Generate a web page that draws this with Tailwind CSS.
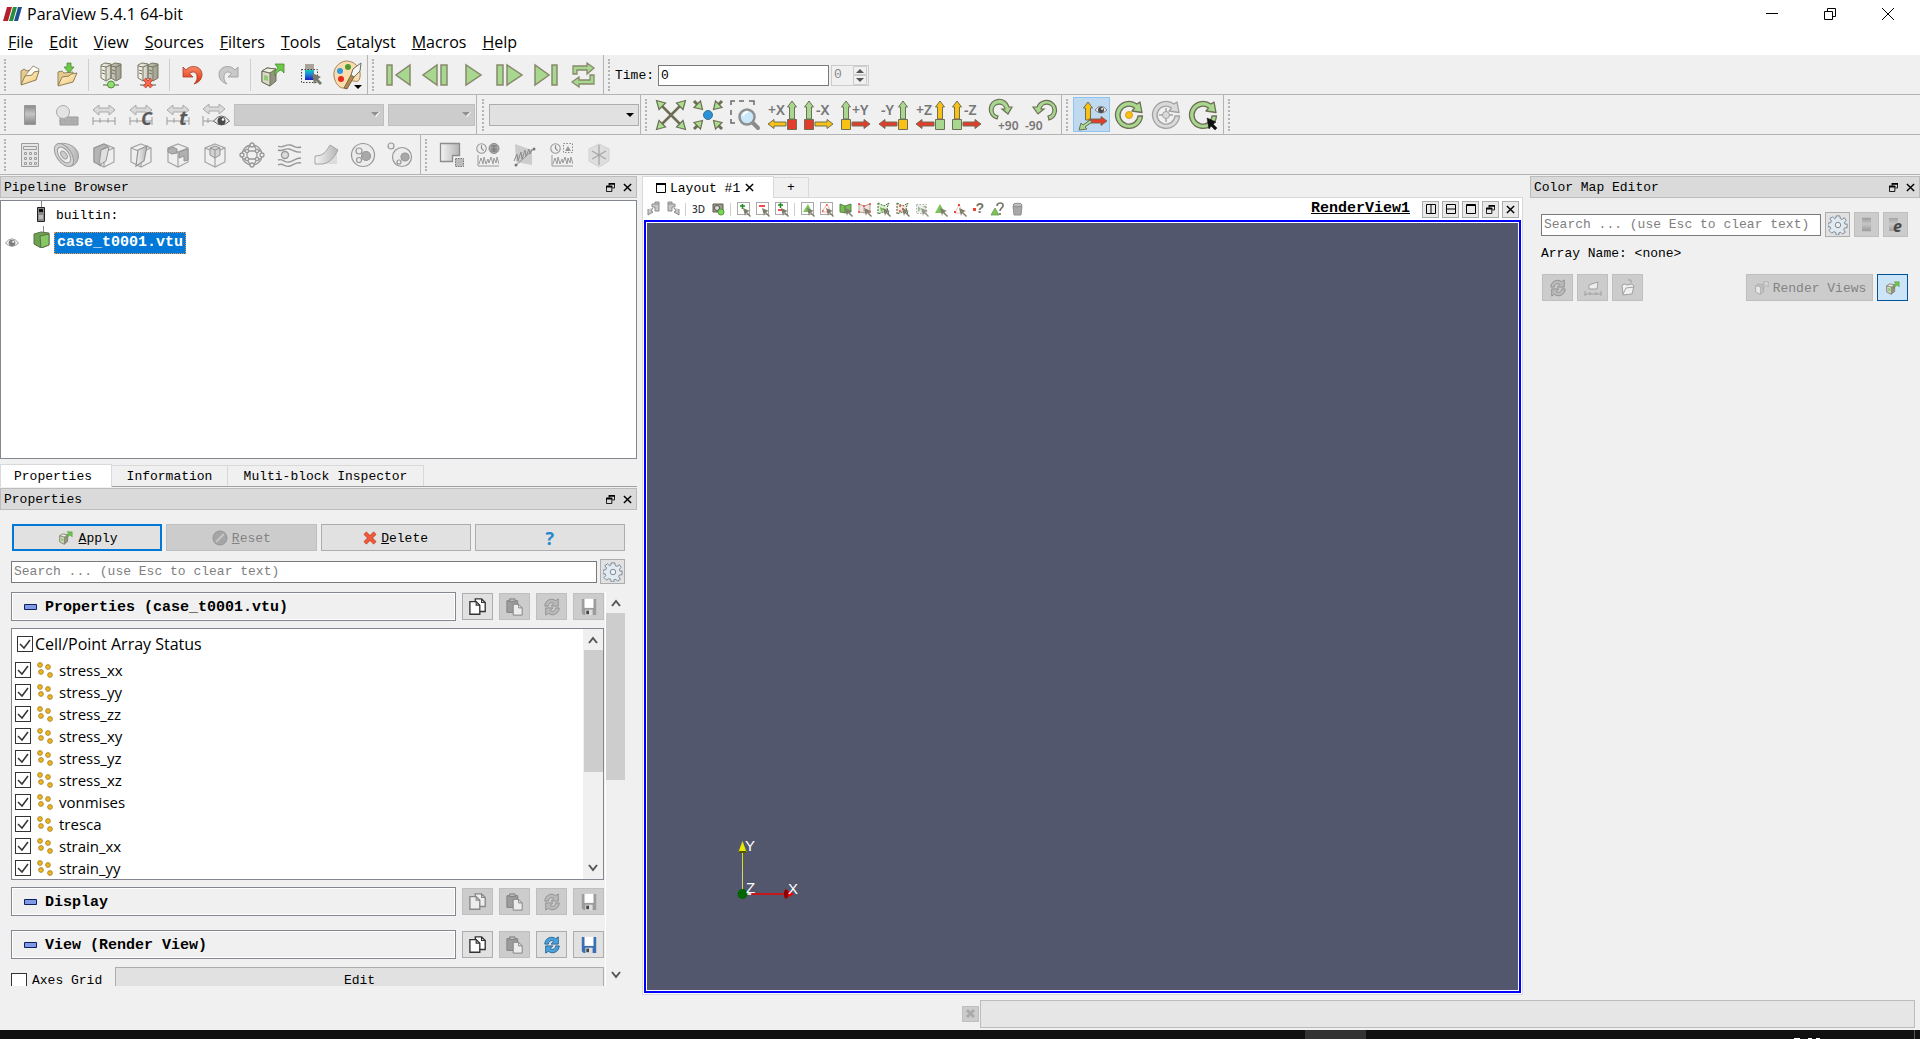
<!DOCTYPE html>
<html lang="en">
<head>
  <meta charset="UTF-8">
  <meta name="viewport" content="width=device-width, initial-scale=1.0">
  <title>ParaView 5.4.1 64-bit</title>
  <script src="https://cdn.jsdelivr.net/npm/@tailwindcss/browser@4"></script>
</head>
<body class="h-screen flex flex-col overflow-hidden bg-[#f0f0f0] text-black text-[13px] leading-4 font-['Liberation_Mono',monospace]">

  <!-- Icon sprite -->
  <svg class="absolute size-0" aria-hidden="true">
    <defs>
      <linearGradient id="gGrey" x1="0" y1="0" x2="1" y2="0"><stop offset="0" stop-color="#f4f4f4"/><stop offset="1" stop-color="#b4b4b4"/></linearGradient>
      <linearGradient id="gBar" x1="0" y1="0" x2="0" y2="1"><stop offset="0" stop-color="#8a8a8a"/><stop offset=".45" stop-color="#c4c4c4"/><stop offset="1" stop-color="#858585"/></linearGradient>
      <linearGradient id="gFolder" x1="0" y1="0" x2="1" y2="1"><stop offset="0" stop-color="#fff3cf"/><stop offset="1" stop-color="#f2c777"/></linearGradient>
      <linearGradient id="gServer" x1="0" y1="0" x2="1" y2="0"><stop offset="0" stop-color="#fafaf4"/><stop offset="1" stop-color="#9b9b8c"/></linearGradient>
      <linearGradient id="gRed" x1="0" y1="0" x2="0" y2="1"><stop offset="0" stop-color="#f88a66"/><stop offset="1" stop-color="#dd2b0c"/></linearGradient>
      <linearGradient id="gRainbow" x1="0" y1="0" x2="0" y2="1"><stop offset="0" stop-color="#12c9b0"/><stop offset=".4" stop-color="#1a8de0"/><stop offset="1" stop-color="#1b1fb8"/></linearGradient>
    </defs>

    <symbol id="folder" viewBox="0 0 32 32">
      <path d="M7 25V12l3-2 3 2 3-1 7 3z" fill="#e8c98a" stroke="#8d8468"/>
      <path d="M11 17L19 7l6 3-3 11z" fill="#fdfdf8" stroke="#9b957e"/>
      <path d="M7 26l4-9 7-1 2-3 5-1-3 9z" fill="url(#gFolder)" stroke="#8d7f55" stroke-linejoin="round"/>
    </symbol>
    <symbol id="folder-in" viewBox="0 0 32 32">
      <path d="M7 26V13l4-1 2 2 9-1v4z" fill="#e8c98a" stroke="#8d8468"/>
      <path d="M7 27l4-9 7-1 2-2 6-1-4 9z" fill="url(#gFolder)" stroke="#8d7f55" stroke-linejoin="round"/>
      <path d="M16 4h4v4h3l-5 6-5-6h3z" fill="#6cc84a" stroke="#4f8a36" stroke-width=".8"/>
    </symbol>
    <symbol id="server" viewBox="0 0 32 32">
      <path d="M6 6l4-2 6 1v14l-5 3-5-3z M16 6l4-2 6 1v14l-5 3-5-3z" fill="url(#gServer)" stroke="#77775f"/>
      <path d="M6 7l5 1v13M11 8l5-2M16 7l5 1v13M21 8l5-2M7 11l3 1M7 14l3 1M17 11l3 1M17 14l3 1" fill="none" stroke="#77775f"/>
      <path d="M8 26h16" stroke="#8c8c78" stroke-width="1.500"/>
    </symbol>
    <symbol id="undo" viewBox="0 0 32 32">
      <path d="M7 8v10h10l-3.500-3.500c3.500-3 8-1.500 7.500 4.500 0 2-1 4-3 6 5-1.500 8-5 8-9.500 0-5-4-8-8.500-8-3 0-5.500 1-7.500 3.500z" stroke-width=".8"/>
    </symbol>
    <symbol id="apply" viewBox="0 0 32 32">
      <path d="M5 12l5-3 9 1v12l-6 5-8-4z" fill="#94947f" stroke="#6f6f5c"/>
      <path d="M5 12l8 2v13l-8-4z" fill="#dadaca" stroke="#6f6f5c"/>
      <path d="M5 12l5-3 9 1-6 4z" fill="#efefe4" stroke="#6f6f5c"/>
      <path d="M7 16l4 1v5l-4-1z" fill="#8fce70"/>
      <path d="M27 5v9l-3-3c-3 1-5 3-6 6-1-4 1-7 3-8l-3-4z" fill="#6cc84a" stroke="#4c8a31" stroke-width=".8"/>
    </symbol>
    <symbol id="apply-grey" viewBox="0 0 32 32">
      <path d="M5 12l5-3 9 1v12l-6 5-8-4z" fill="#c2c2c2" stroke="#9a9a9a"/>
      <path d="M5 12l8 2v13l-8-4z" fill="#ececec" stroke="#9a9a9a"/>
      <path d="M27 5v9l-3-3c-3 1-5 3-6 6-1-4 1-7 3-8l-3-4z" fill="#dcdcdc" stroke="#9a9a9a"/>
    </symbol>
    <symbol id="cursor" viewBox="0 0 12 14"><path d="M1 1l9 4-3 2 4 4-2 2-4-4-2 3z"/></symbol>
    <symbol id="dbl-arrow" viewBox="0 0 32 32">
      <path d="M5 11l6-5v3h10V6l6 5-6 5v-3H11v3z" fill="#d9d9d9" stroke="#aaa"/>
    </symbol>
    <symbol id="ruler" viewBox="0 0 32 32"><path d="M5 18v8M27 18v8M5 22h22M12 19v5M20 19v5" fill="none" stroke="#9a9a9a"/></symbol>
    <symbol id="eye" viewBox="0 0 16 12">
      <path d="M0 6Q8-4 16 6 8 14 0 6z" fill="#e9e9e9" stroke="#666"/><circle cx="8" cy="6" r="4" fill="#4a4a4a"/><circle cx="9.500" cy="4.500" r="1.300" fill="#fff"/>
    </symbol>
    <symbol id="cube" viewBox="0 0 32 32">
      <path d="M16 5l10 4v14l-10 5-10-5V9z" fill="#efefef" stroke="#a4a4a4" stroke-width="1.200"/>
      <path d="M6 9l10 4 10-4M16 13v15" fill="none" stroke="#a4a4a4" stroke-width="1.200"/>
    </symbol>
    <symbol id="wave" viewBox="0 0 22 12"><path d="M1 0v11h21M2 9l2-6 2 6 1-7 2 7 2-5 1 4 2-6 2 7 1-6 2 5 1-6 2 7" fill="none" stroke="#9a9a9a"/></symbol>
    <symbol id="clock" viewBox="0 0 10 10"><circle cx="5" cy="5" r="4.300" fill="#eee" stroke="#9a9a9a"/><path d="M5 2v3l2 2" fill="none" stroke="#888"/></symbol>

    <symbol id="arr-up" viewBox="0 0 10 20"><path d="M5 1l4.500 6H7.500v12h-5V7H.5z" stroke="#6e6e55" stroke-linejoin="round"/></symbol>
    <symbol id="arr-left" viewBox="0 0 20 10"><path d="M1 5l6-4.500v2.500h12v4H7v2.500z" stroke="#6e6e55" stroke-linejoin="round"/></symbol>
    <symbol id="arr-right" viewBox="0 0 20 10"><path d="M19 5l-6-4.500v2.500H1v4h12v2.500z" stroke="#6e6e55" stroke-linejoin="round"/></symbol>
    <symbol id="ring" viewBox="0 0 32 32">
      <path d="M29.500 17A13.500 13.500 0 1 1 24 5L27 3l2 10.500-10-1.500 2.500-3A9 9 0 1 0 25 17z" stroke-width="1.300" stroke-linejoin="round"/>
    </symbol>

    <symbol id="float" viewBox="0 0 10 10"><path d="M3.500 3V.5h6v5H7M.5 3.500h6v6h-6z" fill="none" stroke="#000"/><path d="M3 1h7M0 4h7" stroke="#000" stroke-width="2"/></symbol>
    <symbol id="cross" viewBox="0 0 10 10"><path d="M1 1l8 8M9 1l-8 8" stroke="#000" stroke-width="1.600"/></symbol>
    <symbol id="gear" viewBox="0 0 22 22">
      <path d="M9 1h4l.5 3 2 .8L18 3l2 3-2 2 .6 2H21v4l-3 .3-.8 1.700L19 19l-3 2-2-2-2 .6V22H9l-.6-3-2-.6L4 20l-3-3 2-2-.6-2H0V9l3-.5.800-2L2 4l3-2 2 2 1.600-.6z" fill="#e2eaf1" stroke="#75808a"/>
      <circle cx="11" cy="11" r="3" fill="#f0f0f0" stroke="#75808a"/>
    </symbol>
    <symbol id="copy" viewBox="0 0 20 20">
      <path d="M7 1h7l4 4v10H7z" stroke-width="1.500"/><path d="M1 4h7l4 4v10H1z" stroke-width="1.500"/><path d="M8 4v4h4M14 1v4h4" fill="none" stroke-width="1.300"/>
    </symbol>
    <symbol id="paste" viewBox="0 0 20 20">
      <path d="M1 3h12v13H1z" fill="#9c9c9c" stroke="#7e7e7e"/><path d="M4 1h6v3H4z" fill="#b9b9b9" stroke="#7e7e7e"/>
      <path d="M8 7h6l4 4v8H8z" fill="#ececec" stroke="#7e7e7e"/><path d="M14 7v4h4" fill="none" stroke="#7e7e7e"/>
    </symbol>
    <symbol id="refresh" viewBox="0 0 20 20">
      <path d="M2 9C2 3 9-1 14 3l3-2v8H9l3-3C9 4 6 6 6 9z"/><path d="M18 11c0 6-7 10-12 6l-3 2v-8h8l-3 3c3 2 6 0 6-3z"/>
    </symbol>
    <symbol id="floppy" viewBox="0 0 20 20">
      <path d="M2 1h16v18H4l-2-2z"/><path d="M5 1h10v10H5z" fill="#fff"/><path d="M6 13h8v6H6z" fill="#ddd"/><path d="M7 14h3v4H7z" fill="#444"/>
    </symbol>
    <symbol id="minus" viewBox="0 0 13 6"><path d="M.5.5h12v5H.5z" fill="#7f9ae6" stroke="#10205f"/></symbol>
    <symbol id="chev-up" viewBox="0 0 10 8"><path d="M1 7l4-5 4 5" fill="none" stroke="#555" stroke-width="2"/></symbol>
    <symbol id="chev-down" viewBox="0 0 10 8"><path d="M1 1l4 5 4-5" fill="none" stroke="#555" stroke-width="2"/></symbol>
    <symbol id="points" viewBox="0 0 16 18">
      <g fill="#f0b41c" stroke="#9a7d2c" stroke-width=".8"><circle cx="3" cy="4" r="2.400"/><circle cx="11" cy="6" r="2.400"/><circle cx="4" cy="11" r="2.400"/><circle cx="13" cy="14" r="2.400"/></g>
    </symbol>
    <symbol id="check" viewBox="0 0 16 16"><path d="M3 8l4 4 6-8" fill="none" stroke="#333" stroke-width="1.500"/></symbol>
    <symbol id="dots" viewBox="0 0 16 16"><path d="M1.500 1.500h12v12h-12z" fill="none" stroke="#555" stroke-dasharray="1 1"/></symbol>
    <symbol id="ptr" viewBox="0 0 16 16"><path d="M7 7l7 3-3 1 4 4-1 1-4-4-1 3z" fill="#7d7d6c"/></symbol>
    <symbol id="block" viewBox="0 0 16 16"><path d="M2 3l5 2 6-2v8l-5 1-6-1z" stroke-width=".9"/><path d="M7 5v7" stroke-width=".9"/></symbol>
  </svg>

  <!-- Title bar -->
  <header class="h-7 shrink-0 bg-white flex items-center pl-[3px] pr-[3px] font-['Open_Sans',sans-serif] text-[16px]">
    <svg class="w-[19px] h-4" viewBox="0 0 19 16"><path d="M4 1h5L5 15H0z" fill="#b3202c"/><path d="M10 1h4l-4 14H6z" fill="#2a8c3c"/><path d="M15 1h4l-4 14h-4z" fill="#1d4f91"/></svg>
    <h1 class="ml-[5px]">ParaView 5.4.1 64-bit</h1>
    <div class="ml-auto flex">
      <button class="w-[58px] flex justify-center" aria-label="Minimize"><svg class="size-3" viewBox="0 0 12 12"><path d="M0 5.500h12" stroke="#000"/></svg></button>
      <button class="w-[58px] flex justify-center" aria-label="Restore"><svg class="size-3" viewBox="0 0 12 12"><path d="M3.500 3V.5h8v8H9M.5 3.500h8v8h-8z" fill="none" stroke="#000"/></svg></button>
      <button class="w-[58px] flex justify-center" aria-label="Close"><svg class="size-3" viewBox="0 0 12 12"><path d="M0 0l12 12M12 0L0 12" stroke="#000"/></svg></button>
    </div>
  </header>

  <!-- Menu -->
  <nav class="h-[27px] shrink-0 bg-white flex items-center gap-4 pl-2 font-['Open_Sans',sans-serif] text-[16px]">
    <a href="#"><u>F</u>ile</a>
    <a href="#"><u>E</u>dit</a>
    <a href="#"><u>V</u>iew</a>
    <a href="#"><u>S</u>ources</a>
    <a href="#"><u>F</u>ilters</a>
    <a href="#"><u>T</u>ools</a>
    <a href="#"><u>C</u>atalyst</a>
    <a href="#"><u>M</u>acros</a>
    <a href="#"><u>H</u>elp</a>
  </nav>

  <!-- Main toolbar, VCR controls, time -->
  <div class="h-10 shrink-0 flex border-b border-[#b4b4b4]">
    <div class="flex items-center border-r border-[#b4b4b4] pr-[2px] pt-px">
      <span class="w-[11px] h-8 flex pl-1"><span class="border-l-2 border-dotted border-[#b4b4b4]"></span></span>
      <button class="w-[37px] flex justify-center" aria-label="Open"><svg class="size-8"><use href="#folder"/></svg></button>
      <button class="w-[37px] flex justify-center" aria-label="Load state"><svg class="size-8"><use href="#folder-in"/></svg></button>
      <span class="w-[7px] h-8 flex justify-center"><span class="border-l border-[#cfcfcf]"></span></span>
      <button class="w-[37px] flex justify-center" aria-label="Connect"><svg class="size-8" viewBox="0 0 32 32"><use href="#server"/><circle cx="16" cy="25.500" r="3.500" fill="#8fe070" stroke="#4f8a36"/></svg></button>
      <button class="w-[37px] flex justify-center" aria-label="Disconnect"><svg class="size-8" viewBox="0 0 32 32"><use href="#server"/><path d="M12.500 20l7 8M19.500 20l-7 8" stroke="#a33020" stroke-width="3.500"/><path d="M12.500 20l7 8M19.500 20l-7 8" stroke="#ff6a50" stroke-width="2.200"/></svg></button>
      <span class="w-[7px] h-8 flex justify-center"><span class="border-l border-[#cfcfcf]"></span></span>
      <button class="w-[37px] flex justify-center" aria-label="Undo"><svg class="size-8" viewBox="0 0 32 32" fill="url(#gRed)" stroke="#a83a22"><use href="#undo"/></svg></button>
      <button class="w-[37px] flex justify-center" aria-label="Redo"><svg class="size-8 -scale-x-100" viewBox="0 0 32 32" fill="#c9c9c9" stroke="#979797"><use href="#undo"/></svg></button>
      <span class="w-[7px] h-8 flex justify-center"><span class="border-l border-[#cfcfcf]"></span></span>
      <button class="w-[37px] flex justify-center" aria-label="Auto apply"><svg class="size-8"><use href="#apply"/></svg></button>
      <button class="w-[37px] flex justify-center" aria-label="Find data"><svg class="size-8" viewBox="0 0 32 32"><path d="M11 5h9v6h-9z" fill="#a9a59a"/><path d="M11 11h9v10h-9z" fill="url(#gRainbow)"/><path d="M7.500 10.500h16v13h-16z" fill="none" stroke="#444" stroke-dasharray="1.500 1.500"/><use href="#cursor" x="17" y="13" width="12" height="14" fill="#77776c"/></svg></button>
      <button class="w-[37px] flex justify-center" aria-label="Color palette"><svg class="size-8" viewBox="0 0 32 32">
        <path d="M15 2C7 3 2 10 3 17c1 8 6 13 11 12 4-1 2-5 5-7 3-1 7 2 9-1 3-6 0-13-4-16-2-2-6-3-9-3z" fill="#fbdcae" stroke="#a08558"/>
        <circle cx="17" cy="8" r="3" fill="#4e9a2e"/><circle cx="9" cy="12" r="3" fill="#2c9be0"/><circle cx="10" cy="20" r="3" fill="#e8291c"/>
        <path d="M13 29l7-13 3 2-7 12z" fill="#b28a4e" stroke="#6b532c" stroke-width=".8"/><path d="M20 16l2-6 8-6-1 8-6 6z" fill="#f6f6f0" stroke="#6b6b60"/>
        <path d="M23 26h8l-4 4z" fill="#000"/></svg></button>
    </div>
    <div class="flex items-center border-r border-[#b4b4b4] pr-[2px] pt-px">
      <span class="w-[11px] h-8 flex pl-1"><span class="border-l-2 border-dotted border-[#b4b4b4]"></span></span>
      <button class="w-[37px] flex justify-center" aria-label="First frame"><svg class="size-8" viewBox="0 0 32 32" fill="#a8d78f" stroke="#87896b" stroke-width="1.500"><path d="M5 6h5v20H5zM28 6v20L14 16z"/></svg></button>
      <button class="w-[37px] flex justify-center" aria-label="Previous frame"><svg class="size-8" viewBox="0 0 32 32" fill="#a8d78f" stroke="#87896b" stroke-width="1.500"><path d="M18 6v20L4 16zM22 6h6v20h-6z"/></svg></button>
      <button class="w-[37px] flex justify-center" aria-label="Play"><svg class="size-8" viewBox="0 0 32 32" fill="#a8d78f" stroke="#87896b" stroke-width="1.500"><path d="M10 6v20l15-10z"/></svg></button>
      <button class="w-[37px] flex justify-center" aria-label="Next frame"><svg class="size-8" viewBox="0 0 32 32" fill="#a8d78f" stroke="#87896b" stroke-width="1.500"><path d="M4 6h6v20H4zM14 6v20l15-10z"/></svg></button>
      <button class="w-[37px] flex justify-center" aria-label="Last frame"><svg class="size-8" viewBox="0 0 32 32" fill="#a8d78f" stroke="#87896b" stroke-width="1.500"><path d="M5 6v20l14-10zM22 6h5v20h-5z"/></svg></button>
      <button class="w-[37px] flex justify-center" aria-label="Loop"><svg class="size-8" viewBox="0 0 32 32" fill="#a8d78f" stroke="#87896b" stroke-width="1.300"><path d="M6 15V7h14V4l7 5-7 6v-4H10v4zM27 16v9H12v3l-7-5 7-5v3h11v-5z"/></svg></button>
    </div>
    <div class="flex items-center pt-px">
      <span class="w-[11px] h-8 flex pl-1"><span class="border-l-2 border-dotted border-[#b4b4b4]"></span></span>
      <label for="time" class="w-[43px] pt-[2px]">Time:</label>
      <input id="time" type="text" value="0" class="w-[171px] h-[21px] bg-white border border-[#7a7a7a] px-[2px] outline-none">
      <div class="ml-[2px] w-[38px] h-[21px] border border-[#ccc] flex items-center justify-between pl-[2px] text-[#888]">
        <input type="text" value="0" disabled aria-label="Time step" class="w-4">
        <svg class="w-[15px] h-[19px]" viewBox="0 0 15 19"><path d="M.5.5h13v8H.5zM.5 9.500h13v9H.5z" fill="#f0f0f0" stroke="#ccc"/><path d="M3 7h8L7 3zM3 12h8l-4 4z" fill="#555"/></svg>
      </div>
    </div>
  </div>

  <!-- Color toolbar, representation, camera -->
  <div class="h-10 shrink-0 flex border-b border-[#b4b4b4]">
    <div class="flex items-center border-r border-[#b4b4b4] pr-px">
      <span class="w-[11px] h-8 flex pl-1"><span class="border-l-2 border-dotted border-[#b4b4b4]"></span></span>
      <button class="w-[37px] flex justify-center" disabled aria-label="Toggle color legend"><svg class="size-8" viewBox="0 0 32 32"><path d="M10.500 6.500h11v19h-11z" fill="url(#gBar)" stroke="#9a9a9a"/></svg></button>
      <button class="w-[37px] flex justify-center" disabled aria-label="Edit color map"><svg class="size-8" viewBox="0 0 32 32"><path d="M9 18h18v8H9z" fill="#b0b0b0" stroke="#999"/><path d="M14 18v8M21 18v8M8 22h19" stroke="#a8a8a8"/><circle cx="12" cy="13" r="6.500" fill="#e3e3e3" stroke="#aaa"/></svg></button>
      <button class="w-[37px] flex justify-center" disabled aria-label="Rescale to data range"><svg class="size-8" viewBox="0 0 32 32"><use href="#dbl-arrow"/><use href="#ruler"/></svg></button>
      <button class="w-[37px] flex justify-center" disabled aria-label="Rescale to custom range"><svg class="size-8" viewBox="0 0 32 32"><use href="#dbl-arrow"/><use href="#ruler"/><text x="16" y="26" font-family="Open Sans, sans-serif" font-size="18" font-weight="bold" font-style="italic" fill="#5a5a5a">C</text></svg></button>
      <button class="w-[37px] flex justify-center" disabled aria-label="Rescale over time"><svg class="size-8" viewBox="0 0 32 32"><use href="#dbl-arrow"/><use href="#ruler"/><text x="17" y="26" font-family="Open Sans, sans-serif" font-size="20" font-weight="bold" font-style="italic" fill="#5a5a5a">t</text></svg></button>
      <button class="w-[37px] flex justify-center" disabled aria-label="Rescale to visible range"><svg class="size-8" viewBox="0 0 32 32"><use href="#dbl-arrow" x="-1" y="-1"/><path d="M4 17v10M4 22h11M9 19v5" stroke="#9a9a9a"/><use href="#eye" x="14" y="16" width="17" height="12"/></svg></button>
      <div class="grid items-center ml-px">
        <select disabled aria-label="Color array" class="col-start-1 row-start-1 appearance-none w-[150px] h-[22px] bg-[#ccc] border border-[#bfbfbf]"><option></option></select>
        <svg class="col-start-1 row-start-1 justify-self-end mr-1 w-[9px] h-[6px]" viewBox="0 0 9 6"><path d="M1 0h8L5 5z" fill="#fff"/><path d="M0 0h8L4 4z" fill="#909090"/></svg>
      </div>
      <div class="grid items-center ml-1">
        <select disabled aria-label="Component" class="col-start-1 row-start-1 appearance-none w-[87px] h-[22px] bg-[#ccc] border border-[#bfbfbf]"><option></option></select>
        <svg class="col-start-1 row-start-1 justify-self-end mr-1 w-[9px] h-[6px]" viewBox="0 0 9 6"><path d="M1 0h8L5 5z" fill="#fff"/><path d="M0 0h8L4 4z" fill="#909090"/></svg>
      </div>
    </div>
    <div class="flex items-center border-r border-[#b4b4b4] pr-px">
      <span class="w-3 h-8 flex pl-[5px]"><span class="border-l-2 border-dotted border-[#b4b4b4]"></span></span>
      <div class="grid items-center">
        <select aria-label="Representation" class="col-start-1 row-start-1 appearance-none w-[150px] h-[22px] bg-[#e1e1e1] border border-[#adadad]"><option></option></select>
        <svg class="col-start-1 row-start-1 justify-self-end mr-[5px] w-2 h-1" viewBox="0 0 8 4"><path d="M0 0h8L4 4z"/></svg>
      </div>
    </div>
    <div class="flex items-center border-r border-[#b4b4b4] pr-[2px] font-['Noto_Sans',sans-serif]">
      <span class="w-[11px] h-8 flex pl-1"><span class="border-l-2 border-dotted border-[#b4b4b4]"></span></span>
      <button class="w-[37px] flex justify-center" aria-label="Reset camera"><svg class="size-8" viewBox="0 0 32 32"><path d="M6 6l20 20M26 6L6 26" stroke="#6e6e55" stroke-width="2.500"/><path d="M1.500 1.500l9 2.500-6.500 6.500zM30.500 1.500L28 10.500 21.500 4zM1.500 30.500L4 21.500l6.500 6.500zM30.500 30.500L21.500 28l6.500-6.500z" fill="#a8e08e" stroke="#6e6e55" stroke-width="1.200"/></svg></button>
      <button class="w-[37px] flex justify-center" aria-label="Zoom to data"><svg class="size-8" viewBox="0 0 32 32"><path d="M2 2l5 5M30 2l-5 5M2 30l5-5M30 30l-5-5" stroke="#6e6e55" stroke-width="3"/><path d="M10.500 10.500L2 8.500 8.500 2zM21.500 10.500l2-8.500L30 8.500zM10.500 21.500l-2 8.500L2 23.500zM21.500 21.500l8.500 2-6.500 6.500z" fill="#a8e08e" stroke="#6e6e55" stroke-width="1.200"/><circle cx="16" cy="16" r="4.500" fill="#2592da" stroke="#45708c"/></svg></button>
      <button class="w-[37px] flex justify-center" aria-label="Zoom to box"><svg class="size-8" viewBox="0 0 32 32"><path d="M2 6V2h4M10 2h5M20 2h5v4M2 11v5M2 20v4h4" fill="none" stroke="#6a6a6a" stroke-width="1.500"/><path d="M23 23l6 6" stroke="#8b8b8b" stroke-width="4" stroke-linecap="round"/><circle cx="18" cy="18" r="7.500" fill="#c9e9fb" stroke="#909090" stroke-width="2.500"/><path d="M14 17q1-4 5-4" fill="none" stroke="#fff" stroke-width="2"/></svg></button>
      <button class="w-[37px] flex justify-center" aria-label="Set view +X"><svg class="size-8 overflow-visible" viewBox="0 0 32 32"><text x="2" y="16" font-size="14" font-weight="600" fill="#777" class="tracking-normal">+X</text><use href="#arr-up" x="21" y="1" width="10" height="20" fill="#a8d78f"/><use href="#arr-left" x="1" y="20" width="20" height="10" fill="#f9c016"/><path d="M21.500 20.500h9v10h-9z" fill="#e23d2c" stroke="#6e6e55"/></svg></button>
      <button class="w-[37px] flex justify-center" aria-label="Set view -X"><svg class="size-8 overflow-visible" viewBox="0 0 32 32"><text x="13" y="16" font-size="14" font-weight="600" fill="#777">-X</text><use href="#arr-up" x="1" y="1" width="10" height="20" fill="#a8d78f"/><use href="#arr-right" x="11" y="20" width="20" height="10" fill="#f9c016"/><path d="M1.500 20.500h9v10h-9z" fill="#e23d2c" stroke="#6e6e55"/></svg></button>
      <button class="w-[37px] flex justify-center" aria-label="Set view +Y"><svg class="size-8 overflow-visible" viewBox="0 0 32 32"><text x="12" y="16" font-size="14" font-weight="600" fill="#777">+Y</text><use href="#arr-up" x="1" y="1" width="10" height="20" fill="#a8d78f"/><use href="#arr-right" x="11" y="20" width="20" height="10" fill="#e23d2c"/><path d="M1.500 20.500h9v10h-9z" fill="#f9c016" stroke="#6e6e55"/></svg></button>
      <button class="w-[37px] flex justify-center" aria-label="Set view -Y"><svg class="size-8 overflow-visible" viewBox="0 0 32 32"><text x="4" y="16" font-size="14" font-weight="600" fill="#777">-Y</text><use href="#arr-up" x="21" y="1" width="10" height="20" fill="#a8d78f"/><use href="#arr-left" x="1" y="20" width="20" height="10" fill="#e23d2c"/><path d="M21.500 20.500h9v10h-9z" fill="#f9c016" stroke="#6e6e55"/></svg></button>
      <button class="w-[37px] flex justify-center" aria-label="Set view +Z"><svg class="size-8 overflow-visible" viewBox="0 0 32 32"><text x="2" y="16" font-size="14" font-weight="600" fill="#777">+Z</text><use href="#arr-up" x="21" y="1" width="10" height="20" fill="#f9c016"/><use href="#arr-left" x="1" y="20" width="20" height="10" fill="#e23d2c"/><path d="M21.500 20.500h9v10h-9z" fill="#a8d78f" stroke="#6e6e55"/></svg></button>
      <button class="w-[37px] flex justify-center" aria-label="Set view -Z"><svg class="size-8 overflow-visible" viewBox="0 0 32 32"><text x="13" y="16" font-size="14" font-weight="600" fill="#777">-Z</text><use href="#arr-up" x="1" y="1" width="10" height="20" fill="#f9c016"/><use href="#arr-right" x="11" y="20" width="20" height="10" fill="#e23d2c"/><path d="M1.500 20.500h9v10h-9z" fill="#a8d78f" stroke="#6e6e55"/></svg></button>
      <button class="w-[37px] flex justify-center" aria-label="Rotate +90"><svg class="size-8 overflow-visible" viewBox="0 0 32 32"><path d="M9 20A10 10 0 1 1 21 8h3l-4 7-6-5h3a6 6 0 1 0-7 7z" fill="#a8d78f" stroke="#6e6e55" stroke-width="1.200"/><text x="10" y="31" font-size="12" font-weight="600" fill="#777">+90</text></svg></button>
      <button class="w-[37px] flex justify-center" aria-label="Rotate -90"><svg class="size-8 overflow-visible" viewBox="0 0 32 32"><path d="M24 21A10 10 0 1 0 12 8H8l5 7 6-5h-3a6 6 0 1 1 7 7z" fill="#a8d78f" stroke="#6e6e55" stroke-width="1.200"/><text x="0" y="31" font-size="12" font-weight="600" fill="#777">-90</text></svg></button>
    </div>
    <div class="flex items-center border-r border-[#b4b4b4] pr-[2px]">
      <span class="w-[11px] h-8 flex pl-1"><span class="border-l-2 border-dotted border-[#b4b4b4]"></span></span>
      <button class="w-[37px] h-[35px] flex justify-center items-center bg-[#bfdaf0] border border-[#8fc4ef]" aria-label="Show orientation axes" aria-pressed="true"><svg class="size-8 shrink-0" viewBox="0 0 32 32"><use href="#arr-up" x="7" y="2" width="10" height="20" fill="#f9c016"/><use href="#arr-right" x="12" y="17" width="20" height="10" fill="#e23d2c"/><path d="M14 21l-7 5-2-2-2 7 8-1-2-2 7-5z" fill="#a8d78f" stroke="#6e6e55"/><use href="#eye" x="19" y="6" width="12" height="10"/></svg></button>
      <button class="w-[37px] flex justify-center" aria-label="Show center"><svg class="size-8" viewBox="0 0 32 32" fill="#a8d78f" stroke="#6e6e55"><use href="#ring"/><circle cx="16" cy="16" r="3.500" fill="#f9c016" stroke="#d9a014"/></svg></button>
      <button class="w-[37px] flex justify-center" aria-label="Reset center"><svg class="size-8" viewBox="0 0 32 32" fill="#dadada" stroke="#a2a2a2"><use href="#ring"/><path d="M16 9v14M9 16h14" stroke-width="1.500"/><circle cx="16" cy="16" r="3.500"/></svg></button>
      <button class="w-[37px] flex justify-center" aria-label="Pick center"><svg class="size-8" viewBox="0 0 32 32" fill="#a8d78f" stroke="#6e6e55"><use href="#ring"/><use href="#cursor" x="19" y="18" width="12" height="14" fill="#111" stroke="#111" stroke-width=".5"/></svg></button>
    </div>
    <div class="flex items-center"><span class="w-[11px] h-8 flex pl-1"><span class="border-l-2 border-dotted border-[#b4b4b4]"></span></span></div>
  </div>

  <!-- Common filters, data analysis -->
  <div class="h-10 shrink-0 flex border-b border-[#b4b4b4]">
    <div class="flex items-center border-r border-[#b4b4b4] pr-[2px]">
      <span class="w-[11px] h-8 flex pl-1"><span class="border-l-2 border-dotted border-[#b4b4b4]"></span></span>
      <button class="w-[37px] flex justify-center" disabled aria-label="Calculator"><svg class="size-8" viewBox="0 0 32 32" fill="#e6e6e6" stroke="#9c9c9c"><path d="M7.500 4.500h17v23h-17zM9.500 7.500h13v3h-13zM10.500 13.500h2v2h-2zM15.500 13.500h2v2h-2zM20.500 13.500h2v2h-2zM10.500 18.500h2v2h-2zM15.500 18.500h2v2h-2zM20.500 18.500h2v2h-2zM10.500 23.500h2v2h-2zM15.500 23.500h2v2h-2zM20.500 23.500h2v2h-2z"/></svg></button>
      <button class="w-[37px] flex justify-center" disabled aria-label="Contour"><svg class="size-8" viewBox="0 0 32 32" stroke="#9c9c9c"><path d="M6 5c12-3 24 5 21 15-1 5-6 8-9 7z" fill="url(#gGrey)"/><g transform="rotate(55 13 16)"><ellipse cx="13" cy="16" rx="13" ry="7.500" fill="#d2d2d2"/><ellipse cx="13" cy="16" rx="9" ry="5" fill="#eee"/><ellipse cx="13" cy="16" rx="4.500" ry="2.500" fill="#ccc"/></g></svg></button>
      <button class="w-[37px] flex justify-center" disabled aria-label="Clip"><svg class="size-8" viewBox="0 0 32 32"><use href="#cube"/><path d="M6 9l10-4 4 2-7 4v16l-7-4z" fill="#b4b4b4" stroke="#949494"/><path d="M13 11l8-3-3 14-7 4z" fill="#e0e0e0" stroke="#949494"/></svg></button>
      <button class="w-[37px] flex justify-center" disabled aria-label="Slice"><svg class="size-8" viewBox="0 0 32 32"><use href="#cube"/><path d="M13 11l9-4-3 15-8 5z" fill="url(#gGrey)" stroke="#949494" stroke-width="1.200"/></svg></button>
      <button class="w-[37px] flex justify-center" disabled aria-label="Threshold"><svg class="size-8" viewBox="0 0 32 32"><use href="#cube"/><path d="M6 10l5-2 4 2v4l-5 1-4-2zM17 13l9-3v11l-4 1v-5l-5 2z" fill="#b0b0b0" stroke="#949494"/></svg></button>
      <button class="w-[37px] flex justify-center" disabled aria-label="Extract subset"><svg class="size-8" viewBox="0 0 32 32"><use href="#cube"/><path d="M16 7l5 2v7l-5 3-5-3V9z" fill="#d2d2d2" stroke="#949494"/><path d="M11 9l5 2 5-2M16 11v8" fill="none" stroke="#949494"/></svg></button>
      <button class="w-[37px] flex justify-center" disabled aria-label="Glyph"><svg class="size-8" viewBox="0 0 32 32" fill="none" stroke="#989898" stroke-width="1.300"><circle cx="16" cy="16" r="10"/><ellipse cx="16" cy="16" rx="5" ry="10"/><path d="M7 12h18M7 20h18"/><g fill="#eee"><circle cx="16" cy="6" r="2"/><circle cx="16" cy="26" r="2"/><circle cx="6" cy="16" r="2"/><circle cx="26" cy="16" r="2"/><circle cx="11" cy="12" r="1.700"/><circle cx="21" cy="12" r="1.700"/><circle cx="11" cy="20" r="1.700"/><circle cx="21" cy="20" r="1.700"/></g></svg></button>
      <button class="w-[37px] flex justify-center" disabled aria-label="Stream tracer"><svg class="size-8" viewBox="0 0 32 32" fill="none" stroke="#989898" stroke-width="1.400"><path d="M5 7c5 3 7-2 12-1s6 4 11 2M5 11c5 2 6-2 11-1s6 4 12 3M5 21c5-2 6 3 11 2s6-4 12-4M5 26c5-3 7 3 12 1s6-4 11-3"/><circle cx="12" cy="16" r="3.500" fill="#ddd"/></svg></button>
      <button class="w-[37px] flex justify-center" disabled aria-label="Warp by vector"><svg class="size-8" viewBox="0 0 32 32"><path d="M5 18c9 0 12-4 15-11l7 5v13H5z" fill="#dcdcdc"/><path d="M5 17c8 0 11-4 15-11l8 5c-4 8-8 12-15 14H5z" fill="url(#gGrey)" stroke="#a4a4a4"/></svg></button>
      <button class="w-[37px] flex justify-center" disabled aria-label="Group datasets"><svg class="size-8" viewBox="0 0 32 32" fill="#ececec" stroke="#989898" stroke-width="1.200"><circle cx="16" cy="16" r="11.500"/><circle cx="19" cy="17" r="4.500" fill="#a8a8a8"/><circle cx="12" cy="12" r="3"/><circle cx="12" cy="21" r="2.500"/></svg></button>
      <button class="w-[37px] flex justify-center" disabled aria-label="Extract level"><svg class="size-8" viewBox="0 0 32 32" fill="#ececec" stroke="#989898" stroke-width="1.200"><circle cx="18" cy="18" r="9.500"/><circle cx="21" cy="18" r="4" fill="#a8a8a8"/><circle cx="7" cy="7" r="3"/><circle cx="15" cy="23" r="2"/></svg></button>
    </div>
    <div class="flex items-center">
      <span class="w-[11px] h-8 flex pl-1"><span class="border-l-2 border-dotted border-[#b4b4b4]"></span></span>
      <button class="w-[37px] flex justify-center" disabled aria-label="Extract selection"><svg class="size-8" viewBox="0 0 32 32"><path d="M5.500 4.500h19v12h-7v6h-12z" fill="url(#gGrey)" stroke="#8c8c8c" stroke-width="1.300"/><path d="M20.500 19.500h8v8h-8z" fill="#bbb" stroke="#777" stroke-dasharray="1.500 1"/></svg></button>
      <button class="w-[37px] flex justify-center" disabled aria-label="Plot global variables"><svg class="size-8" viewBox="0 0 32 32"><use href="#clock" x="4" y="4" width="11" height="11"/><circle cx="22" cy="9.500" r="5" fill="#aaa" stroke="#8a8a8a"/><path d="M19 7h6M19 10h6M19 12h6M22 6v7" stroke="#777"/><use href="#wave" x="5" y="16" width="22" height="12"/></svg></button>
      <button class="w-[37px] flex justify-center" disabled aria-label="Plot over line"><svg class="size-8" viewBox="0 0 32 32"><path d="M6 5l17 6v15l-16-3z" fill="#ccc"/><path d="M6 27L26 9M5 22l3-7 1 7 3-9 1 7 3-9 1 6 3-7 1 5 2-5" fill="none" stroke="#8c8c8c"/><circle cx="7" cy="26" r="1.500" fill="#777"/><circle cx="25" cy="10" r="1.500" fill="#777"/></svg></button>
      <button class="w-[37px] flex justify-center" disabled aria-label="Plot selection over time"><svg class="size-8" viewBox="0 0 32 32"><use href="#clock" x="4" y="4" width="11" height="11"/><path d="M17.500 4.500h9v9h-9z" fill="none" stroke="#888" stroke-dasharray="1.500 1.500"/><path d="M22 7l3 5h-6z" fill="#999"/><use href="#wave" x="5" y="16" width="22" height="12"/></svg></button>
      <button class="w-[37px] flex justify-center" disabled aria-label="Probe location"><svg class="size-8" viewBox="0 0 32 32"><path d="M16 5l10 5v12l-10 6-10-6V10z" fill="#dedede" stroke="#d0d0d0"/><path d="M16 6v20M9 12l14 8M23 12L9 20" stroke="#a6a6a6" stroke-width="1.300"/></svg></button>
    </div>
  </div>

  <main class="flex-1 min-h-0 flex pt-px">

    <!-- Left docks -->
    <section class="w-[637px] shrink-0 flex flex-col mb-[9px]">
      <div class="h-[22px] shrink-0 bg-[#dadada] border border-[#bcbcbc] flex items-center pl-[3px] pr-1">
        <h2 class="pt-[2px]">Pipeline Browser</h2>
        <button class="ml-auto mr-2" aria-label="Float"><svg class="size-[9px]"><use href="#float"/></svg></button>
        <button aria-label="Close"><svg class="size-[9px]"><use href="#cross"/></svg></button>
      </div>
      <div class="mt-[2px] h-[259px] shrink-0 bg-white border border-[#828790]">
        <div class="flex items-center h-7 pl-9">
          <svg class="w-2 h-[22px] mb-2" viewBox="0 0 8 22"><path d="M4.500 0v7" stroke="#888"/><path d="M.5 7.500h7v14h-7z" fill="#8b8b8b" stroke="#222"/><path d="M2 9h4v3H2z" fill="#111"/><path d="M2 15h4v4H2z" fill="#bbb"/></svg>
          <span class="ml-[11px] pt-[2px]">builtin:</span>
        </div>
        <div class="flex items-center h-[27px] pl-1">
          <svg class="w-[14px] h-[10px] opacity-70"><use href="#eye"/></svg>
          <svg class="ml-[14px] w-[17px] h-[22px] mb-3" viewBox="0 0 17 22"><path d="M10.500 0v6" stroke="#888"/><path d="M1 8l7-2 8 1v12l-8 3-7-4z" fill="#6ba24c" stroke="#5b6e50"/><path d="M7 10l9-2v11l-8 3z" fill="#86c964" stroke="#5b6e50"/></svg>
          <strong class="ml-[4px] h-[22px] px-[2px] bg-[#0078d7] text-white text-[15px] leading-5 border border-dotted border-[#e8954f]">case_t0001.vtu</strong>
        </div>
      </div>

      <div class="mt-[5px] h-[23px] shrink-0 flex items-end border-b border-[#a0a0a0]">
        <button class="h-[23px] w-[112px] bg-white border-x border-t border-[#d9d9d9] pt-[2px] pr-[22px] pl-[13px] -mb-px">Properties</button>
        <button class="h-[21px] w-[116px] border-t border-r border-[#d9d9d9] pt-[2px]">Information</button>
        <button class="h-[21px] w-[196px] border-t border-r border-[#d9d9d9] pt-[2px]">Multi-block Inspector</button>
      </div>
      <div class="mt-px h-[22px] shrink-0 bg-[#dadada] border border-[#bcbcbc] flex items-center pl-[3px] pr-1">
        <h2 class="pt-[2px]">Properties</h2>
        <button class="ml-auto mr-2" aria-label="Float"><svg class="size-[9px]"><use href="#float"/></svg></button>
        <button aria-label="Close"><svg class="size-[9px]"><use href="#cross"/></svg></button>
      </div>

      <div class="mt-[14px] mx-3 grid grid-cols-4 gap-1 shrink-0">
        <button class="h-[27px] flex items-center justify-center gap-1 bg-[#e1e1e1] border-2 border-[#0078d7]"><svg class="size-[18px]"><use href="#apply"/></svg><span class="pt-[2px]"><u>A</u>pply</span></button>
        <button disabled class="h-[27px] flex items-center justify-center gap-1 bg-[#ccc] border border-[#bfbfbf] text-[#838383]"><svg class="size-4" viewBox="0 0 16 16"><circle cx="8" cy="8" r="7" fill="#a5a5a5" stroke="#959595"/><path d="M4 12l8-8" stroke="#c6c6c6" stroke-width="2"/></svg><span class="pt-[2px]"><u>R</u>eset</span></button>
        <button class="h-[27px] flex items-center justify-center gap-1 bg-[#e1e1e1] border border-[#adadad]"><svg class="size-[14px]" viewBox="0 0 14 14"><path d="M2 2l10 10M12 2L2 12" stroke="#b8452c" stroke-width="4"/><path d="M2 2l10 10M12 2L2 12" stroke="#f1593b" stroke-width="3"/></svg><span class="pt-[2px]"><u>D</u>elete</span></button>
        <button class="h-[27px] flex items-center justify-center bg-[#e1e1e1] border border-[#adadad] text-[#2389cf] text-[18px] font-bold font-['Open_Sans',sans-serif]">?</button>
      </div>
      <div class="mt-2 ml-[11px] mr-3 flex items-center gap-[3px] shrink-0">
        <input type="text" aria-label="Search properties" placeholder="Search ... (use Esc to clear text)" class="flex-1 h-[22px] bg-white border border-[#7a7a7a] px-[2px] outline-none placeholder:text-[#808080]">
        <button class="size-[25px] bg-[#e1e1e1] border border-[#adadad] flex items-center justify-center" aria-label="Advanced"><svg class="size-5"><use href="#gear"/></svg></button>
      </div>

      <!-- Scroll area -->
      <div class="mt-2 ml-[11px] mr-3 flex-1 min-h-0 flex overflow-hidden">
        <div class="flex-1 min-w-0 pr-px">
          <div class="flex items-center gap-[6px]">
            <button class="flex-1 h-[29px] border border-[#828790] outline outline-white -outline-offset-2 flex items-center gap-2 pl-3 text-[15px] font-bold"><svg class="w-[13px] h-[6px]"><use href="#minus"/></svg><span class="pt-[2px]">Properties (case_t0001.vtu)</span></button>
            <button class="w-[31px] h-[27px] bg-[#e1e1e1] border border-[#adadad] flex items-center justify-center" aria-label="Copy"><svg class="w-[18px] h-5" fill="#fff" stroke="#333"><use href="#copy"/></svg></button>
            <button disabled class="w-[31px] h-[27px] bg-[#ccc] border border-[#bfbfbf] flex items-center justify-center" aria-label="Paste"><svg class="w-[18px] h-5"><use href="#paste"/></svg></button>
            <button disabled class="w-[31px] h-[27px] bg-[#ccc] border border-[#bfbfbf] flex items-center justify-center" aria-label="Reset"><svg class="w-[18px] h-5" fill="#b9b9b9" stroke="#8f8f8f"><use href="#refresh"/></svg></button>
            <button disabled class="w-[31px] h-[27px] bg-[#ccc] border border-[#bfbfbf] flex items-center justify-center" aria-label="Save"><svg class="w-[18px] h-5" fill="#9c9c9c"><use href="#floppy"/></svg></button>
          </div>

          <div class="mt-[7px] h-[252px] bg-white border border-[#828790] flex overflow-hidden font-['Open_Sans',sans-serif] text-[15px]">
            <div class="flex-1">
              <label class="h-[30px] flex items-center pl-[5px] gap-[2px]">
                <span class="grid"><input type="checkbox" checked class="col-start-1 row-start-1 appearance-none size-4 bg-white border border-[#333]"><svg class="col-start-1 row-start-1 size-4 pointer-events-none"><use href="#check"/></svg></span>
                <span class="text-[16px]">Cell/Point Array Status</span>
              </label>
              <div id="arrays"></div>
            </div>
            <div class="w-5 bg-[#f0f0f0] flex flex-col items-center">
              <svg class="mt-[7px] w-[10px] h-2"><use href="#chev-up"/></svg>
              <div class="mt-[6px] w-[19px] h-[122px] bg-[#cdcdcd]"></div>
              <svg class="mt-auto mb-[7px] w-[10px] h-2"><use href="#chev-down"/></svg>
            </div>
          </div>

          <div class="mt-[7px] flex items-center gap-[6px]">
            <button class="flex-1 h-[29px] border border-[#828790] outline outline-white -outline-offset-2 flex items-center gap-2 pl-3 text-[15px] font-bold"><svg class="w-[13px] h-[6px]"><use href="#minus"/></svg><span class="pt-[2px]">Display</span></button>
            <button disabled class="w-[31px] h-[27px] bg-[#ccc] border border-[#bfbfbf] flex items-center justify-center" aria-label="Copy"><svg class="w-[18px] h-5" fill="#eee" stroke="#888"><use href="#copy"/></svg></button>
            <button disabled class="w-[31px] h-[27px] bg-[#ccc] border border-[#bfbfbf] flex items-center justify-center" aria-label="Paste"><svg class="w-[18px] h-5"><use href="#paste"/></svg></button>
            <button disabled class="w-[31px] h-[27px] bg-[#ccc] border border-[#bfbfbf] flex items-center justify-center" aria-label="Reset"><svg class="w-[18px] h-5" fill="#b9b9b9" stroke="#8f8f8f"><use href="#refresh"/></svg></button>
            <button disabled class="w-[31px] h-[27px] bg-[#ccc] border border-[#bfbfbf] flex items-center justify-center" aria-label="Save"><svg class="w-[18px] h-5" fill="#9c9c9c"><use href="#floppy"/></svg></button>
          </div>

          <div class="mt-[14px] flex items-center gap-[6px]">
            <button class="flex-1 h-[29px] border border-[#828790] outline outline-white -outline-offset-2 flex items-center gap-2 pl-3 text-[15px] font-bold"><svg class="w-[13px] h-[6px]"><use href="#minus"/></svg><span class="pt-[2px]">View (Render View)</span></button>
            <button class="w-[31px] h-[27px] bg-[#e1e1e1] border border-[#adadad] flex items-center justify-center" aria-label="Copy"><svg class="w-[18px] h-5" fill="#fff" stroke="#333"><use href="#copy"/></svg></button>
            <button disabled class="w-[31px] h-[27px] bg-[#ccc] border border-[#bfbfbf] flex items-center justify-center" aria-label="Paste"><svg class="w-[18px] h-5"><use href="#paste"/></svg></button>
            <button class="w-[31px] h-[27px] bg-[#e1e1e1] border border-[#adadad] flex items-center justify-center" aria-label="Reset"><svg class="w-[18px] h-5" fill="#4ba3de" stroke="#245f92"><use href="#refresh"/></svg></button>
            <button class="w-[31px] h-[27px] bg-[#e1e1e1] border border-[#adadad] flex items-center justify-center" aria-label="Save"><svg class="w-[18px] h-5" fill="#3a6fb5"><use href="#floppy"/></svg></button>
          </div>

          <div class="mt-2 flex items-center">
            <input id="axes-grid" type="checkbox" class="appearance-none size-4 bg-white border border-[#333]">
            <label for="axes-grid" class="ml-[5px] w-[83px]">Axes Grid</label>
            <button class="flex-1 h-[27px] bg-[#e1e1e1] border border-[#adadad]">Edit</button>
          </div>
        </div>
        <div class="w-5 flex flex-col items-center border-l border-white">
          <svg class="mt-[7px] w-[10px] h-2 shrink-0"><use href="#chev-up"/></svg>
          <div class="mt-[6px] w-[19px] h-[167px] bg-[#cdcdcd]"></div>
          <svg class="mt-auto mb-[7px] w-[10px] h-2 shrink-0"><use href="#chev-down"/></svg>
        </div>
      </div>
    </section>

    <!-- Render view -->
    <section class="flex-1 min-w-0 ml-[5px] flex flex-col">
      <div class="h-[22px] shrink-0 flex items-end">
        <div class="h-[22px] w-[132px] bg-white border-x border-t border-[#d9d9d9] flex items-center pl-[13px] gap-1">
          <svg class="size-[10px]" viewBox="0 0 10 10"><path d="M.5.5h9v9h-9z" fill="none" stroke="#000"/><path d="M0 1h10" stroke="#000" stroke-width="2"/></svg>
          <span class="whitespace-nowrap pt-[2px]">Layout #1</span>
          <button class="ml-px" aria-label="Close layout"><svg class="size-[9px]"><use href="#cross"/></svg></button>
        </div>
        <button class="h-[21px] w-[35px] border-t border-r border-b border-[#d9d9d9]">+</button>
        <div class="flex-1 border-b border-[#d9d9d9]"></div>
      </div>
      <div class="flex-1 min-h-0 bg-white border-x border-b border-[#d9d9d9] px-px pb-px flex flex-col">
        <div class="h-[22px] shrink-0 flex items-center">
          <button class="w-[19px] flex justify-center" aria-label="Undo camera"><svg class="size-4" viewBox="0 0 16 16" fill="#c8c8c8" stroke="#8c8c8c"><path d="M2 8v6l5-3-2-1 2-3M6 3h7v7H9V6H6zM9 3V1h4v2"/></svg></button>
          <button class="w-[19px] flex justify-center" aria-label="Redo camera"><svg class="size-4 -scale-x-100" viewBox="0 0 16 16" fill="#c8c8c8" stroke="#8c8c8c"><path d="M2 8v6l5-3-2-1 2-3M6 3h7v7H9V6H6zM9 3V1h4v2"/></svg></button>
          <span class="w-[7px] h-[13px] flex justify-center"><span class="border-l border-[#cfcfcf]"></span></span>
          <button class="w-[19px] text-[10px] font-['Noto_Sans',sans-serif] font-medium text-[#333]">3D</button>
          <button class="w-[19px] flex justify-center" aria-label="Capture"><svg class="size-4" viewBox="0 0 16 16"><path d="M3 3h10v8H3z" fill="#9a9a88" stroke="#5d5d50"/><circle cx="7" cy="7" r="2.500" fill="#ddd" stroke="#555"/><circle cx="11" cy="11" r="3" fill="#7bd658" stroke="#4f9a36"/></svg></button>
          <span class="w-[7px] h-[13px] flex justify-center"><span class="border-l border-[#cfcfcf]"></span></span>
          <button class="w-[19px] flex justify-center" aria-label="Add selection"><svg class="size-4" viewBox="0 0 16 16"><use href="#dots"/><path d="M4 5h5M6.500 3v5" stroke="#1c8a1c" stroke-width="1.500"/><use href="#ptr"/></svg></button>
          <button class="w-[19px] flex justify-center" aria-label="Subtract selection"><svg class="size-4" viewBox="0 0 16 16"><use href="#dots"/><path d="M4 5h6" stroke="#e11" stroke-width="1.500"/><use href="#ptr"/></svg></button>
          <button class="w-[19px] flex justify-center" aria-label="Toggle selection"><svg class="size-4" viewBox="0 0 16 16"><use href="#dots"/><path d="M4 4h5M6.500 2v5" stroke="#1c8a1c" stroke-width="1.500"/><path d="M4 9h6" stroke="#e11" stroke-width="1.500"/><use href="#ptr"/></svg></button>
          <span class="w-[7px] h-[13px] flex justify-center"><span class="border-l border-[#cfcfcf]"></span></span>
          <button class="w-[19px] flex justify-center" aria-label="Select cells on"><svg class="size-4" viewBox="0 0 16 16"><use href="#dots"/><path d="M8 3l4 8H3z" fill="#7cc45a"/><use href="#ptr"/></svg></button>
          <button class="w-[19px] flex justify-center" aria-label="Select points on"><svg class="size-4" viewBox="0 0 16 16"><use href="#dots"/><path d="M8 3l4 8H3z" fill="none" stroke="#f2b0a6"/><path d="M7 4h1.500M3 10h1.500" stroke="#e43" stroke-width="1.500"/><use href="#ptr"/></svg></button>
          <button class="w-[19px] flex justify-center" aria-label="Select cells through"><svg class="size-4" viewBox="0 0 16 16" fill="#78bd55" stroke="#4f7d3c"><use href="#block"/><use href="#ptr" stroke="none"/></svg></button>
          <button class="w-[19px] flex justify-center" aria-label="Select points through"><svg class="size-4" viewBox="0 0 16 16" fill="#f3e3df" stroke="#a89a90"><use href="#block"/><path d="M1 3h2M6 5h2M12 3h2M1 11h2M12 11h2" stroke="#e43" stroke-width="1.500"/><use href="#ptr" stroke="none"/></svg></button>
          <button class="w-[19px] flex justify-center" aria-label="Select cells with polygon"><svg class="size-4" viewBox="0 0 16 16"><path d="M2 2l6 3 5-3-2 5 2 6-6-2-5 2z" fill="#dff2d6" stroke="#3d6b32" stroke-dasharray="2 1"/><path d="M4 6l4 2-3 3z" fill="#6cb84c"/><use href="#ptr"/></svg></button>
          <button class="w-[19px] flex justify-center" aria-label="Select points with polygon"><svg class="size-4" viewBox="0 0 16 16"><path d="M2 2l6 3 5-3-2 5 2 6-6-2-5 2z" fill="#fbe6e1" stroke="#3d6b32" stroke-dasharray="2 1"/><path d="M4 5h2M7 8h2M4 10h2" stroke="#e43" stroke-width="1.500"/><use href="#ptr"/></svg></button>
          <button class="w-[19px] flex justify-center" aria-label="Select block"><svg class="size-4" viewBox="0 0 16 16" opacity=".8"><path d="M2.500 3.500h10v9h-10z" fill="#e8eee5" stroke="#999" stroke-dasharray="1.500 1.500"/><path d="M4 5l3 3-3 3zM9 5h3v3z" fill="#8aa87d"/><use href="#ptr"/></svg></button>
          <button class="w-[19px] flex justify-center" aria-label="Interactive cells"><svg class="size-4" viewBox="0 0 16 16"><path d="M7 3l5 9H2z" fill="#7cc45a"/><use href="#ptr"/></svg></button>
          <button class="w-[19px] flex justify-center" aria-label="Interactive points"><svg class="size-4" viewBox="0 0 16 16"><path d="M7 4l4 8H3z" fill="none" stroke="#f2c0b6"/><path d="M6 4h2M2 11h2" stroke="#e43" stroke-width="2"/><use href="#ptr"/></svg></button>
          <button class="w-[19px] flex items-center justify-center text-[14px] font-bold text-[#77776a]" aria-label="Hover points"><svg class="w-[3px] h-[3px]" viewBox="0 0 3 3"><path d="M0 0h3v3H0z" fill="#e43"/></svg>?</button>
          <button class="w-[19px] flex justify-center" aria-label="Hover cells"><svg class="size-4" viewBox="0 0 16 16"><path d="M5 7l4 7H1z" fill="#7cc45a" stroke="#5d8f45" stroke-width=".7"/><path d="M7 5c0-4 7-4 6 0 0 2-3 2-3 5M10 12v2" fill="none" stroke="#77776a" stroke-width="1.700"/></svg></button>
          <button class="w-[19px] flex justify-center" aria-label="Clear selection"><svg class="size-4" viewBox="0 0 16 16"><path d="M4 5h9l-1 9H5z" fill="#a8a8a8" stroke="#8f8f8f"/><ellipse cx="8.500" cy="4" rx="4.500" ry="1.800" fill="#bdbdbd" stroke="#8f8f8f"/></svg></button>

          <strong class="ml-auto text-[15px] underline">RenderView1</strong>
          <div class="ml-3 mr-[2px] flex gap-[3px]">
            <button class="size-[17px] bg-[#e9e9e9] border border-[#adadad] flex items-center justify-center" aria-label="Split horizontal"><svg class="size-[10px]" viewBox="0 0 10 10"><path d="M.5.5h9v9h-9zM5 0v10" fill="none" stroke="#000"/></svg></button>
            <button class="size-[17px] bg-[#e9e9e9] border border-[#adadad] flex items-center justify-center" aria-label="Split vertical"><svg class="size-[10px]" viewBox="0 0 10 10"><path d="M.5.5h9v9h-9zM0 5h10" fill="none" stroke="#000"/></svg></button>
            <button class="size-[17px] bg-[#e9e9e9] border border-[#adadad] flex items-center justify-center" aria-label="Maximize"><svg class="size-[10px]" viewBox="0 0 10 10"><path d="M.5.5h9v9h-9zM0 1.500h10" fill="none" stroke="#000"/></svg></button>
            <button class="size-[17px] bg-[#e9e9e9] border border-[#adadad] flex items-center justify-center" aria-label="Float view"><svg class="size-[9px]"><use href="#float"/></svg></button>
            <button class="size-[17px] bg-[#e9e9e9] border border-[#adadad] flex items-center justify-center" aria-label="Close view"><svg class="size-[9px]"><use href="#cross"/></svg></button>
          </div>
        </div>
        <div class="flex-1 min-h-0 border-2 border-[#0000ff] bg-white p-px">
          <div class="h-full bg-[#52576e] flex items-end pl-[86px] pb-[83px]">
            <!-- Orientation axes -->
            <svg class="w-[72px] h-[74px] font-['Liberation_Sans',sans-serif]" viewBox="0 0 72 74" fill="#fff" font-size="15">
              <path d="M9.500 60V26" stroke="#d8d860"/><path d="M9.500 34V14" stroke="#e0e000"/><path d="M9.500 8l4 11h-8z" fill="#e8e800"/><path d="M6 18h7v2H6z" fill="#555500"/>
              <path d="M9 61h10" stroke="#ddd" stroke-width="2"/><path d="M18 61h38" stroke="#f00000" stroke-width="1.500"/><path d="M52 56l9 5-9 5z" fill="#f00000"/><ellipse cx="53" cy="61" rx="2" ry="4.500" fill="#8a0000"/>
              <circle cx="9.500" cy="61" r="5" fill="#006400"/>
              <text x="12" y="18">Y</text><text x="13" y="60">Z</text><text x="55" y="61">X</text>
            </svg>
          </div>
        </div>
      </div>
    </section>

    <!-- Color map editor -->
    <section class="w-[390px] shrink-0 ml-[7px]">
      <div class="h-[22px] bg-[#dadada] border border-[#bcbcbc] flex items-center pl-[3px] pr-1">
        <h2 class="pt-[2px]">Color Map Editor</h2>
        <button class="ml-auto mr-2" aria-label="Float"><svg class="size-[9px]"><use href="#float"/></svg></button>
        <button aria-label="Close"><svg class="size-[9px]"><use href="#cross"/></svg></button>
      </div>
      <div class="mt-[14px] ml-[11px] mr-3 flex items-center gap-1">
        <input type="text" aria-label="Search color map" placeholder="Search ... (use Esc to clear text)" class="flex-1 min-w-0 h-[22px] bg-white border border-[#7a7a7a] px-[2px] outline-none placeholder:text-[#808080]">
        <button class="size-[25px] bg-[#e1e1e1] border border-[#adadad] flex items-center justify-center" aria-label="Advanced"><svg class="size-5"><use href="#gear"/></svg></button>
        <button disabled class="size-[25px] bg-[#ccc] border border-[#bfbfbf] flex items-center justify-center" aria-label="Show legend"><svg class="w-[9px] h-[15px] opacity-70" viewBox="0 0 10 15"><path d="M0 0h10v15H0z" fill="url(#gBar)"/></svg></button>
        <button disabled class="size-[25px] bg-[#ccc] border border-[#bfbfbf] flex items-center justify-center" aria-label="Edit legend"><svg class="size-4 overflow-visible" viewBox="0 0 16 16"><path d="M1 1h9v13H1z" fill="url(#gBar)" opacity=".6"/><text x="5" y="15" font-family="Open Sans, sans-serif" font-size="16" font-weight="bold" font-style="italic" fill="#4a4a4a">e</text></svg></button>
      </div>
      <p class="mt-2 ml-[11px] pt-px">Array Name: &lt;none&gt;</p>
      <div class="mt-3 mx-3 flex gap-1">
        <button disabled class="w-[31px] h-[27px] bg-[#ccc] border border-[#bfbfbf] flex items-center justify-center" aria-label="Rescale"><svg class="w-[18px] h-5" fill="#b9b9b9" stroke="#8f8f8f"><use href="#refresh"/></svg></button>
        <button disabled class="w-[31px] h-[27px] bg-[#ccc] border border-[#bfbfbf] flex items-center justify-center" aria-label="Save preset"><svg class="size-[18px]" viewBox="0 0 18 18"><path d="M5 6l3-1 6-2-1 7H5z" fill="#eee" stroke="#a0a0a0"/><path d="M1 12v5M17 12v5M1 15h16M6 13v3M12 13v3" stroke="#a0a0a0"/></svg></button>
        <button disabled class="w-[31px] h-[27px] bg-[#ccc] border border-[#bfbfbf] flex items-center justify-center" aria-label="Choose preset"><svg class="size-[18px]" viewBox="0 0 18 18"><path d="M3 6l3-1 2 1 5-1 2 2-2 8-9 1z" fill="#f0f0f0" stroke="#a0a0a0"/><path d="M4 15l3-6 8-1M9 1h3v3" fill="none" stroke="#a0a0a0"/></svg></button>
        <button disabled class="ml-auto w-[127px] h-[27px] bg-[#ccc] border border-[#bfbfbf] flex items-center justify-center gap-[2px] whitespace-nowrap text-[#838383]"><svg class="size-[18px]"><use href="#apply-grey"/></svg><span class="pt-[2px]">Render Views</span></button>
        <button class="w-[31px] h-[27px] bg-[#cce4f7] border border-[#005499] flex items-center justify-center" aria-label="Auto update" aria-pressed="true"><svg class="size-[18px]"><use href="#apply"/></svg></button>
      </div>
    </section>
  </main>

  <!-- Status bar -->
  <footer class="h-[35px] shrink-0 flex items-center pt-[2px] pr-[5px]">
    <div class="ml-auto w-[953px] flex items-center gap-px">
      <button disabled class="w-[17px] h-4 bg-[#ccc] border border-[#bfbfbf] flex items-center justify-center" aria-label="Abort"><svg class="size-[11px]" viewBox="0 0 11 11"><path d="M2 2l7 7M9 2L2 9" stroke="#aaa" stroke-width="3"/></svg></button>
      <div class="flex-1 h-7 bg-[#e6e6e6] border border-[#bcbcbc]" role="progressbar" aria-label="Progress"></div>
    </div>
  </footer>

  <!-- Desktop taskbar edge -->
  <div class="h-[9px] shrink-0 bg-[#101010] flex justify-end">
    <span class="w-[61px] bg-[#333]"></span>
    <span class="ml-[428px] mr-[92px] w-7 flex items-end gap-1">
      <span class="w-[6px] h-px bg-white"></span><span class="ml-1 w-1 h-px bg-white"></span><span class="w-1 h-px bg-white"></span>
    </span>
    <span class="w-[6px] border-l border-[#555]"></span>
  </div>

  <script>
    const names = ['stress_xx', 'stress_yy', 'stress_zz', 'stress_xy', 'stress_yz', 'stress_xz', 'vonmises', 'tresca', 'strain_xx', 'strain_yy'];
    document.getElementById('arrays').innerHTML = names.map(n => `
      <label class="h-[22px] flex items-center pl-[3px]">
        <span class="grid"><input type="checkbox" checked class="col-start-1 row-start-1 appearance-none size-4 bg-white border border-[#333]"><svg class="col-start-1 row-start-1 size-4 pointer-events-none"><use href="#check"/></svg></span>
        <svg class="ml-[6px] w-4 h-[18px]"><use href="#points"/></svg>
        <span class="ml-[6px]">${n}</span>
      </label>`).join('');
  </script>
</body>
</html>
